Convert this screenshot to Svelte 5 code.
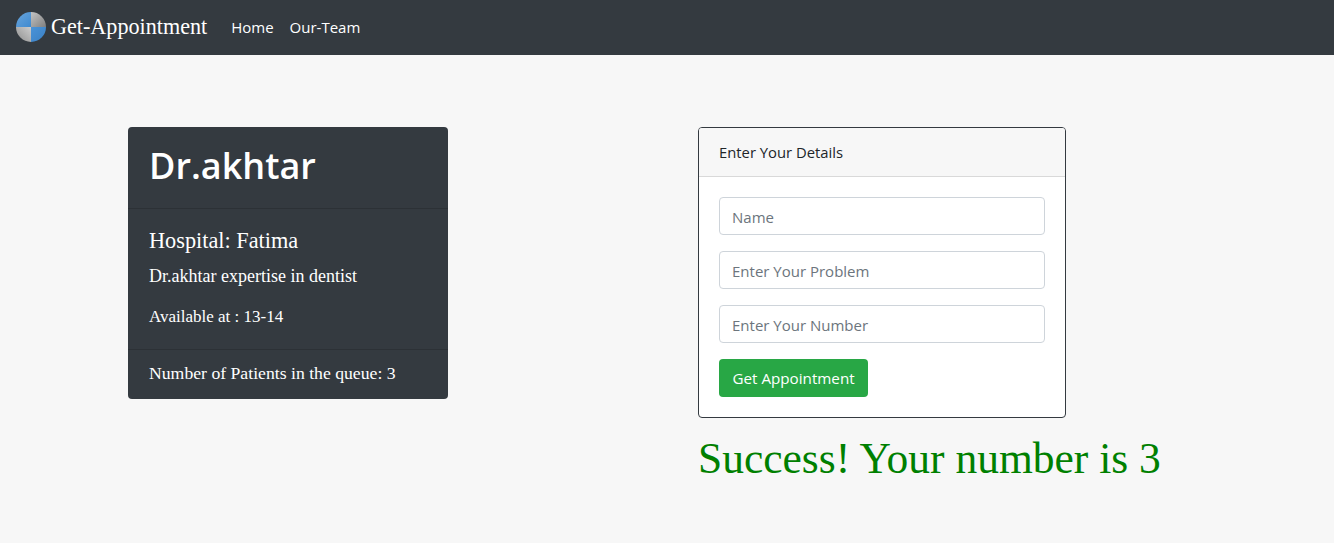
<script>
  const fields = ["Name", "Enter Your Problem", "Enter Your Number"];
</script>

<nav class="navbar">
  <a class="brand" href="#top">
    <svg class="logo" width="32" height="32" viewBox="0 0 32 32" aria-hidden="true">
      <defs>
        <linearGradient id="blue-a" x1="0" y1="0" x2="1" y2="1">
          <stop offset="0" stop-color="#6aa5dc" />
          <stop offset="1" stop-color="#3f8ad0" />
        </linearGradient>
        <linearGradient id="blue-b" x1="0" y1="0" x2="1" y2="1">
          <stop offset="0" stop-color="#4a93d8" />
          <stop offset="1" stop-color="#3a80c4" />
        </linearGradient>
        <linearGradient id="grey-a" x1="0" y1="0" x2="1" y2="1">
          <stop offset="0" stop-color="#c4c4c4" />
          <stop offset="1" stop-color="#7f7f7f" />
        </linearGradient>
        <linearGradient id="grey-b" x1="1" y1="0" x2="0" y2="1">
          <stop offset="0" stop-color="#cdcdcd" />
          <stop offset="1" stop-color="#8d8d8d" />
        </linearGradient>
      </defs>
      <path d="M16 16V1A15 15 0 0 0 1 16Z" fill="url(#blue-a)" />
      <path d="M16 16V1A15 15 0 0 1 31 16Z" fill="url(#grey-a)" />
      <path d="M16 16H1A15 15 0 0 0 16 31Z" fill="url(#grey-b)" />
      <path d="M16 16H31A15 15 0 0 1 16 31Z" fill="url(#blue-b)" />
    </svg>
    <span class="brand-name">Get-Appointment</span>
  </a>
  <a class="nav-link" href="#top">Home</a>
  <a class="nav-link" href="#top">Our-Team</a>
</nav>

<main class="content">
  <section class="card doctor">
    <header class="doctor-head"><h1>Dr.akhtar</h1></header>
    <div class="doctor-body">
      <h5>Hospital: Fatima</h5>
      <p>Dr.akhtar expertise in dentist</p>
      <p class="hours">Available at : 13-14</p>
    </div>
    <footer class="doctor-foot">Number of Patients in the queue: 3</footer>
  </section>

  <div class="booking">
    <form class="card details">
      <header class="details-head">Enter Your Details</header>
      <div class="details-body">
        {#each fields as field}
          <input type="text" placeholder={field} />
        {/each}
        <button type="button">Get Appointment</button>
      </div>
    </form>
    <h1 class="success">Success! Your number is 3</h1>
  </div>
</main>

<style>
  :global(body) {
    background: #f7f7f7;
    font-family: "Open Sans", "Noto Sans", sans-serif;
    font-size: 16px;
    line-height: 1.5;
  }

  .navbar {
    display: flex;
    align-items: center;
    height: 55px;
    box-sizing: border-box;
    padding: 0 16px;
    background: #343a40;
  }

  .brand {
    display: flex;
    align-items: center;
    gap: 4px;
    margin-right: 16px;
    color: #fff;
    text-decoration: none;
    font-family: "Liberation Serif", serif;
    font-size: 22.15px;
  }

  .brand-name {
    padding-bottom: 2px;
  }

  .logo {
    display: block;
    margin-left: -1px;
  }

  .nav-link {
    padding: 0 8px;
    color: #fff;
    text-decoration: none;
    font-size: 15px;
  }

  .content {
    display: flex;
    align-items: flex-start;
    gap: 250px;
    padding: 72px 0 0 128px;
  }

  .card {
    box-sizing: border-box;
    border-radius: 4px;
  }

  .doctor {
    width: 320px;
    background: #343a40;
    color: #fff;
    font-family: "Liberation Serif", serif;
  }

  .doctor-head {
    padding: 15px 21px 12px;
    border-bottom: 1px solid #2c3136;
  }

  .doctor-head h1 {
    margin: 0 0 6px;
    font-family: "Open Sans", sans-serif;
    font-size: 36px;
    font-weight: 600;
    line-height: 48px;
  }

  .doctor-body {
    padding: 20px 21px;
    border-bottom: 1px solid #2c3136;
  }

  .doctor-body h5 {
    margin: 0 0 11px;
    font-size: 22.3px;
    font-weight: 400;
    line-height: 24px;
  }

  .doctor-body p {
    margin: 0 0 17px;
    font-size: 18px;
    line-height: 24px;
  }

  .doctor-body .hours {
    margin-bottom: 0;
    font-size: 17px;
  }

  .doctor-foot {
    padding: 11px 21px 14px;
    font-size: 17.7px;
    line-height: 24px;
  }

  .booking {
    width: 368px;
  }

  .details {
    border: 1px solid #343a40;
    background: #fff;
  }

  .details-head {
    padding: 12px 20px;
    border-bottom: 1px solid #d9d9d9;
    border-radius: 3px 3px 0 0;
    background: #f7f7f7;
    color: #212529;
    font-size: 14.8px;
    line-height: 24px;
  }

  .details-body {
    display: flex;
    flex-direction: column;
    align-items: flex-start;
    gap: 16px;
    padding: 20px;
  }

  input {
    box-sizing: border-box;
    width: 100%;
    height: 38px;
    padding: 7px 12px 5px;
    border: 1px solid #ced4da;
    border-radius: 4px;
    background: #fff;
    font: inherit;
    font-size: 15px;
  }

  input::placeholder {
    color: #6c757d;
    opacity: 1;
  }

  button {
    height: 38px;
    padding: 0 13.5px;
    border: 0;
    border-radius: 4px;
    background: #28a745;
    color: #fff;
    font: inherit;
    font-size: 15.2px;
  }

  .success {
    margin: 16px 0 0;
    width: 520px;
    color: #008000;
    font-family: "Liberation Serif", serif;
    font-size: 43.5px;
    font-weight: 400;
    line-height: 48px;
  }
</style>
